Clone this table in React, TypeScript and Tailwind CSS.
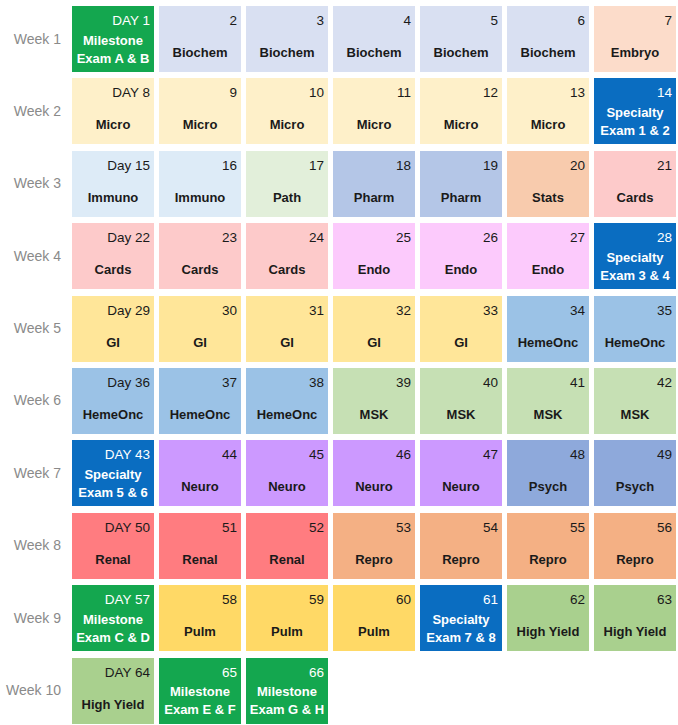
import React from 'react';

type Cell = { num: string; lines: string[]; bg: string; light?: boolean };

const C = {
    milestone: 'bg-[#14a74f]',
    specialty: 'bg-[#0a6dc1]',
    biochem: 'bg-[#d9e0f2]',
    embryo: 'bg-[#fcdcca]',
    micro: 'bg-[#fef0c9]',
    immuno: 'bg-[#ddebf7]',
    path: 'bg-[#e2efda]',
    pharm: 'bg-[#b4c6e7]',
    stats: 'bg-[#f8cbad]',
    cards: 'bg-[#fdcaca]',
    endo: 'bg-[#fccafc]',
    gi: 'bg-[#ffe699]',
    heme: 'bg-[#9bc2e6]',
    msk: 'bg-[#c6e0b4]',
    neuro: 'bg-[#cc99ff]',
    psych: 'bg-[#8ea9db]',
    renal: 'bg-[#ff7c80]',
    repro: 'bg-[#f4b084]',
    pulm: 'bg-[#ffd966]',
    hy: 'bg-[#a9d08e]',
};

const ms = (num: string, a: string): Cell => ({ num, lines: ['Milestone', `Exam ${a}`], bg: C.milestone, light: true });
const sp = (num: string, a: string): Cell => ({ num, lines: ['Specialty', `Exam ${a}`], bg: C.specialty, light: true });
const s = (num: string, label: string, bg: string): Cell => ({ num, lines: [label], bg });

const weeks: Cell[][] = [
    [ms('DAY 1', 'A & B'), s('2', 'Biochem', C.biochem), s('3', 'Biochem', C.biochem), s('4', 'Biochem', C.biochem), s('5', 'Biochem', C.biochem), s('6', 'Biochem', C.biochem), s('7', 'Embryo', C.embryo)],
    [s('DAY 8', 'Micro', C.micro), s('9', 'Micro', C.micro), s('10', 'Micro', C.micro), s('11', 'Micro', C.micro), s('12', 'Micro', C.micro), s('13', 'Micro', C.micro), sp('14', '1 & 2')],
    [s('Day 15', 'Immuno', C.immuno), s('16', 'Immuno', C.immuno), s('17', 'Path', C.path), s('18', 'Pharm', C.pharm), s('19', 'Pharm', C.pharm), s('20', 'Stats', C.stats), s('21', 'Cards', C.cards)],
    [s('Day 22', 'Cards', C.cards), s('23', 'Cards', C.cards), s('24', 'Cards', C.cards), s('25', 'Endo', C.endo), s('26', 'Endo', C.endo), s('27', 'Endo', C.endo), sp('28', '3 & 4')],
    [s('Day 29', 'GI', C.gi), s('30', 'GI', C.gi), s('31', 'GI', C.gi), s('32', 'GI', C.gi), s('33', 'GI', C.gi), s('34', 'HemeOnc', C.heme), s('35', 'HemeOnc', C.heme)],
    [s('Day 36', 'HemeOnc', C.heme), s('37', 'HemeOnc', C.heme), s('38', 'HemeOnc', C.heme), s('39', 'MSK', C.msk), s('40', 'MSK', C.msk), s('41', 'MSK', C.msk), s('42', 'MSK', C.msk)],
    [sp('DAY 43', '5 & 6'), s('44', 'Neuro', C.neuro), s('45', 'Neuro', C.neuro), s('46', 'Neuro', C.neuro), s('47', 'Neuro', C.neuro), s('48', 'Psych', C.psych), s('49', 'Psych', C.psych)],
    [s('DAY 50', 'Renal', C.renal), s('51', 'Renal', C.renal), s('52', 'Renal', C.renal), s('53', 'Repro', C.repro), s('54', 'Repro', C.repro), s('55', 'Repro', C.repro), s('56', 'Repro', C.repro)],
    [ms('DAY 57', 'C & D'), s('58', 'Pulm', C.pulm), s('59', 'Pulm', C.pulm), s('60', 'Pulm', C.pulm), sp('61', '7 & 8'), s('62', 'High Yield', C.hy), s('63', 'High Yield', C.hy)],
    [s('DAY 64', 'High Yield', C.hy), ms('65', 'E & F'), ms('66', 'G & H')],
];

const DayCell = ({ cell }: { cell: Cell }) => (
    <div className={`${cell.bg} h-[66px] flex flex-col ${cell.light ? 'text-white' : 'text-[#1a1a1a]'}`}>
        <div className="text-right pr-[4px] pt-[6px] text-[13.5px] leading-[18px]">{cell.num}</div>
        {/* two-line exam cells sit a little higher than single subjects */}
        <div className={`flex-1 flex flex-col items-center justify-center font-bold text-[13px] leading-[18px] whitespace-nowrap ${cell.lines.length > 1 ? 'pb-[3px]' : 'pt-[4px]'}`}>
            {cell.lines.map((l) => <span key={l}>{l}</span>)}
        </div>
    </div>
);

export default function App() {
    return (
        <div className="w-[678px] h-[725px] bg-white pt-[6px] overflow-hidden" style={{ fontFamily: '"Liberation Sans", Arial, sans-serif' }}>
            <div className="grid grid-cols-[67px_repeat(7,82px)] gap-x-[5px] gap-y-[6.4px]">
                {weeks.map((row, i) => (
                    <React.Fragment key={i}>
                        <div className="h-[66px] flex items-center justify-end pr-[6px] text-[14px] text-[#8a8a8a]">Week {i + 1}</div>
                        {row.map((cell) => <DayCell key={cell.num} cell={cell} />)}
                        {Array.from({ length: 7 - row.length }).map((_, k) => <div key={`e${k}`} />)}
                    </React.Fragment>
                ))}
            </div>
        </div>
    );
}
